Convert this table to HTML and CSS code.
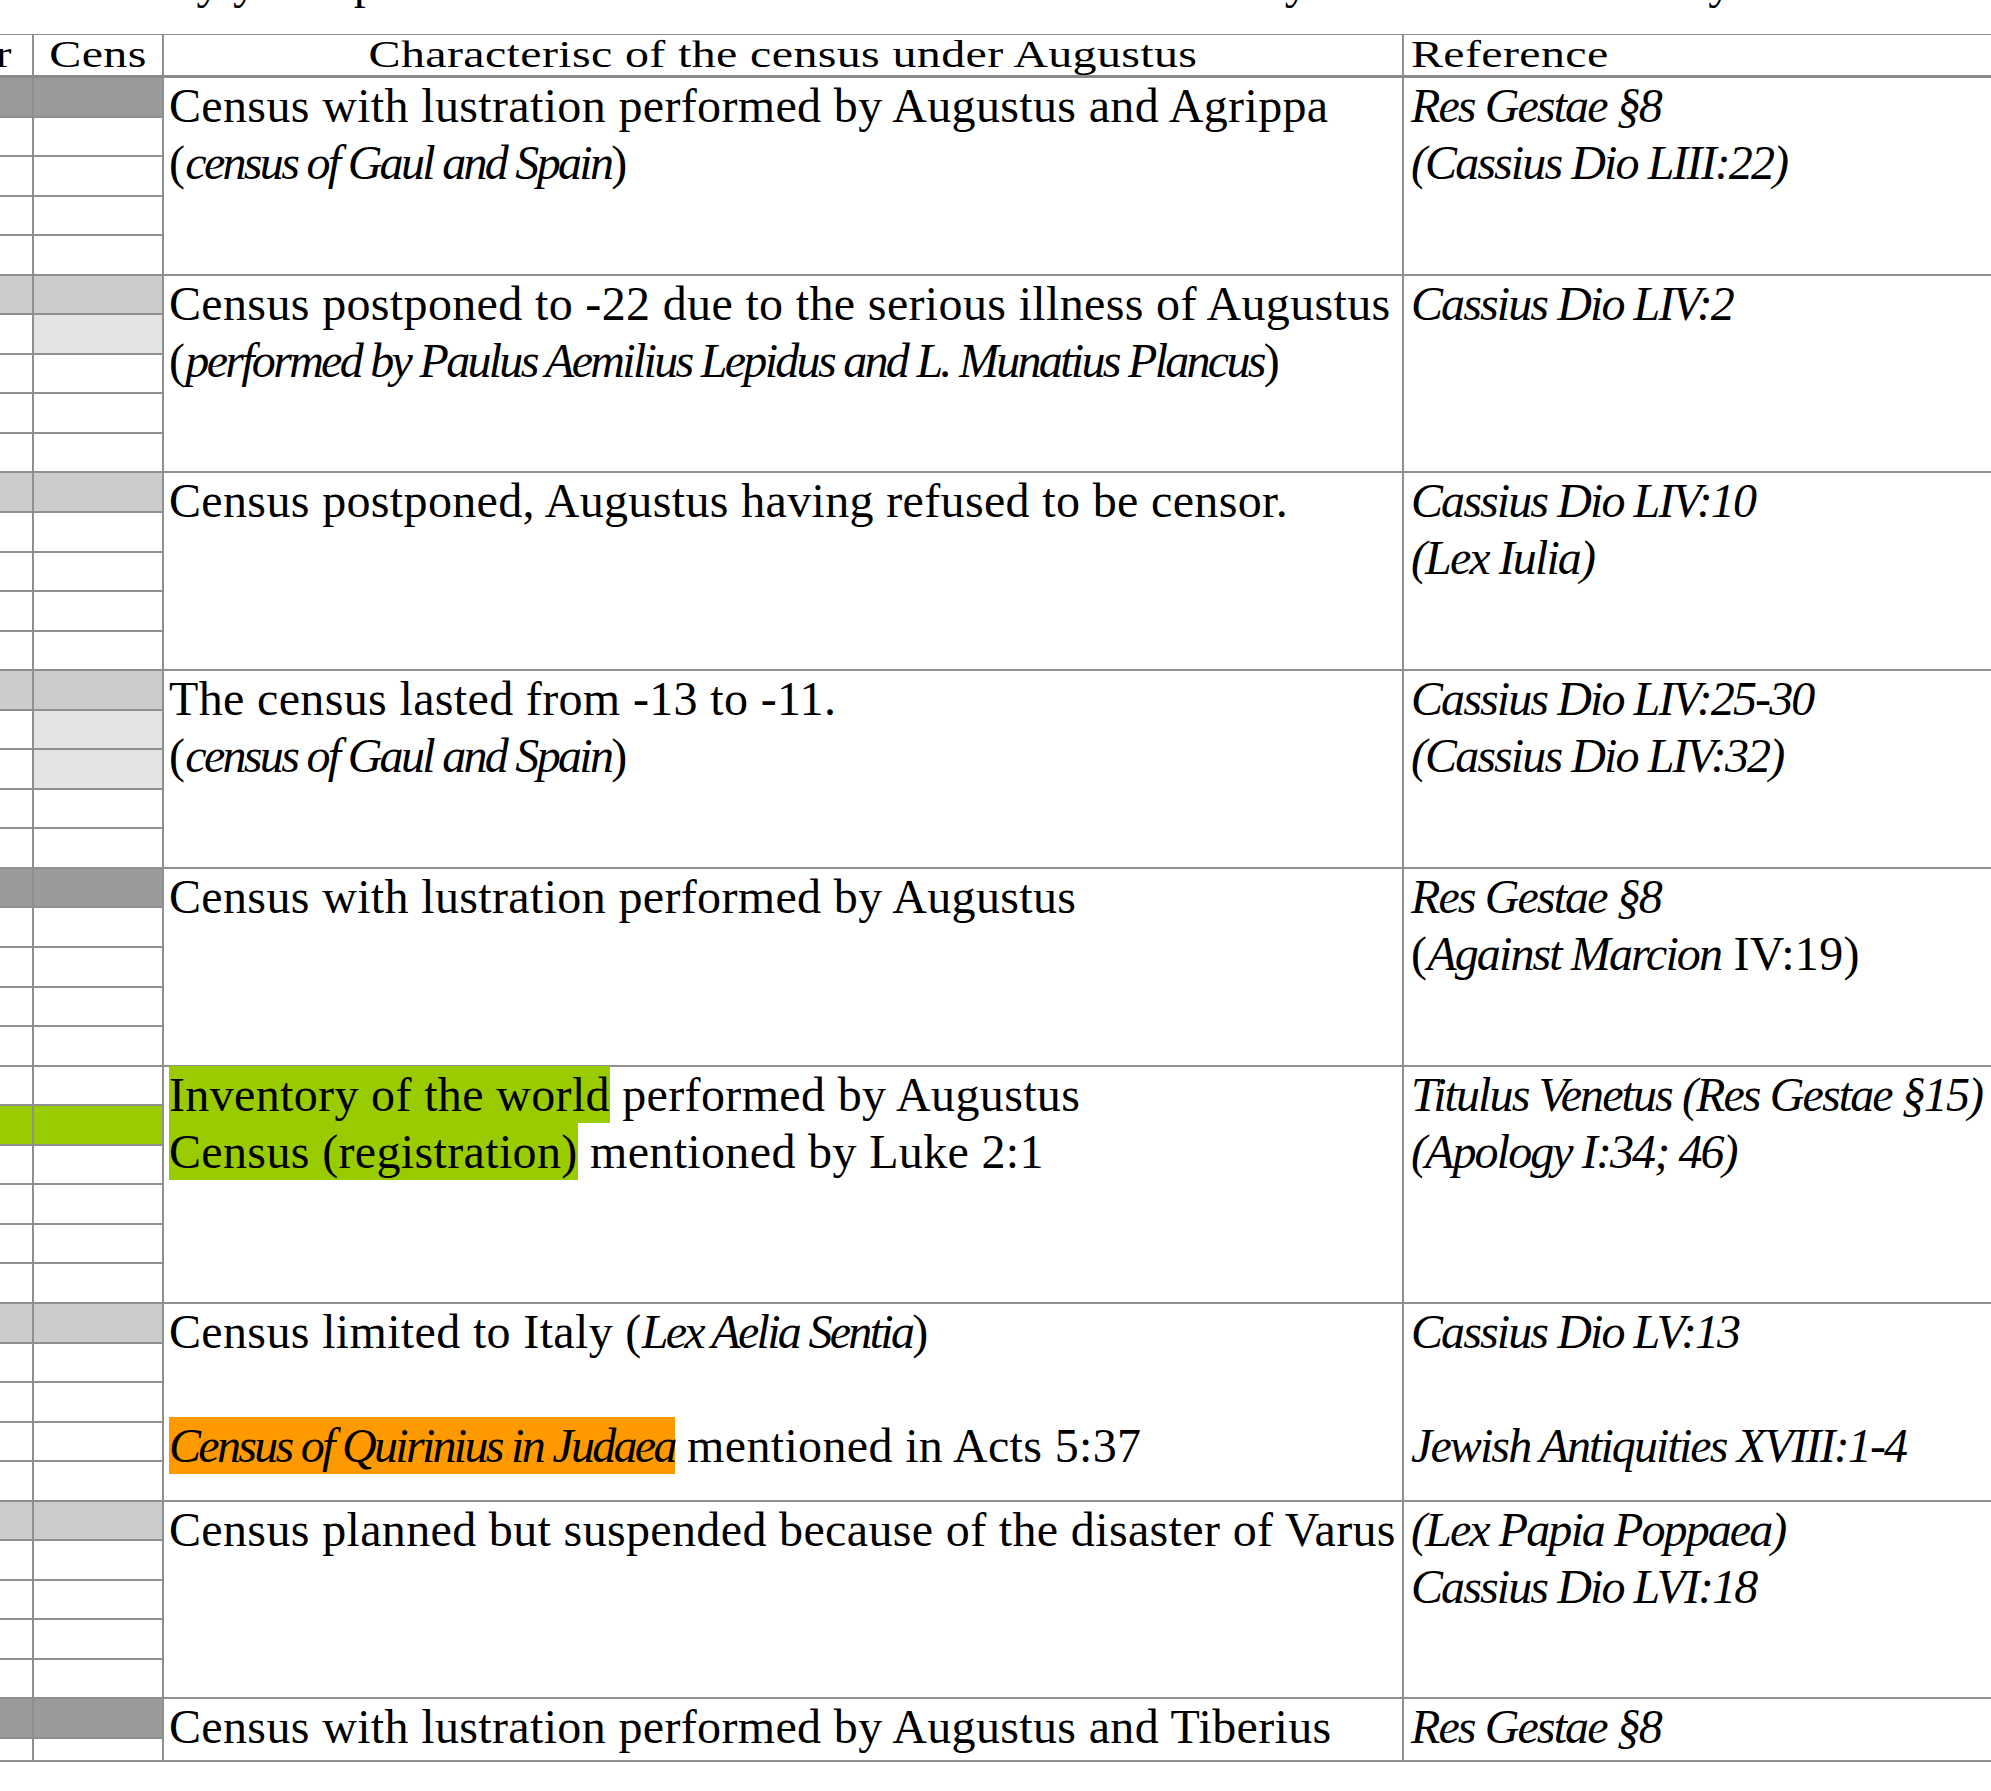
FILE: index.html
```html
<!DOCTYPE html>
<html lang="en">
<head>
<meta charset="utf-8">
<title>Census under Augustus</title>
<link rel="stylesheet" href="styles.css">
</head>
<body>
<div class="page">
  <p class="caption">Ordered by year up to the death of the last consul in the time of a year in which the early census was taken and ended</p>
  <div class="table">
    <div class="c hd"><span class="sq">Year</span></div>
    <div class="c hd"><span class="sq">Cens</span></div>
    <div class="c hd"><span class="sq">Characterisc of the census under Augustus</span></div>
    <div class="c hd left"><span class="sq">Reference</span></div>

    <!-- group 1 -->
    <div class="c dk"></div><div class="c dk"></div>
    <div class="c txt span5"><div class="in">
      <div class="ln">Census with lustration performed by Augustus and Agrippa</div>
      <div class="ln">(<i>census of Gaul and Spain</i>)</div>
    </div></div>
    <div class="c txt ref span5"><div class="in">
      <div class="ln"><i>Res Gestae §8</i></div>
      <div class="ln"><i>(Cassius Dio LIII:22)</i></div>
    </div></div>
    <div class="c"></div><div class="c"></div>
    <div class="c"></div><div class="c"></div>
    <div class="c"></div><div class="c"></div>
    <div class="c"></div><div class="c"></div>

    <!-- group 2 -->
    <div class="c lt"></div><div class="c lt"></div>
    <div class="c txt span5"><div class="in">
      <div class="ln">Census postponed to -22 due to the serious illness of Augustus</div>
      <div class="ln">(<i>performed by Paulus Aemilius Lepidus and L. Munatius Plancus</i>)</div>
    </div></div>
    <div class="c txt ref span5"><div class="in">
      <div class="ln"><i>Cassius Dio LIV:2</i></div>
    </div></div>
    <div class="c"></div><div class="c vl"></div>
    <div class="c"></div><div class="c"></div>
    <div class="c"></div><div class="c"></div>
    <div class="c"></div><div class="c"></div>

    <!-- group 3 -->
    <div class="c lt"></div><div class="c lt"></div>
    <div class="c txt span5"><div class="in">
      <div class="ln">Census postponed, Augustus having refused to be censor.</div>
    </div></div>
    <div class="c txt ref span5"><div class="in">
      <div class="ln"><i>Cassius Dio LIV:10</i></div>
      <div class="ln"><i>(Lex Iulia)</i></div>
    </div></div>
    <div class="c"></div><div class="c"></div>
    <div class="c"></div><div class="c"></div>
    <div class="c"></div><div class="c"></div>
    <div class="c"></div><div class="c"></div>

    <!-- group 4 -->
    <div class="c lt"></div><div class="c lt"></div>
    <div class="c txt span5"><div class="in">
      <div class="ln">The census lasted from -13 to -11.</div>
      <div class="ln">(<i>census of Gaul and Spain</i>)</div>
    </div></div>
    <div class="c txt ref span5"><div class="in">
      <div class="ln"><i>Cassius Dio LIV:25-30</i></div>
      <div class="ln"><i>(Cassius Dio LIV:32)</i></div>
    </div></div>
    <div class="c"></div><div class="c vl"></div>
    <div class="c"></div><div class="c vl"></div>
    <div class="c"></div><div class="c"></div>
    <div class="c"></div><div class="c"></div>

    <!-- group 5 -->
    <div class="c dk"></div><div class="c dk"></div>
    <div class="c txt span5"><div class="in">
      <div class="ln">Census with lustration performed by Augustus</div>
    </div></div>
    <div class="c txt ref span5"><div class="in">
      <div class="ln"><i>Res Gestae §8</i></div>
      <div class="ln">(<i>Against Marcion</i> IV:19)</div>
    </div></div>
    <div class="c"></div><div class="c"></div>
    <div class="c"></div><div class="c"></div>
    <div class="c"></div><div class="c"></div>
    <div class="c"></div><div class="c"></div>

    <!-- group 6 -->
    <div class="c"></div><div class="c"></div>
    <div class="c txt span6"><div class="in">
      <div class="ln"><span class="hl green">Inventory of the world</span> performed by Augustus</div>
      <div class="ln"><span class="hl green">Census (registration)</span> mentioned by Luke 2:1</div>
    </div></div>
    <div class="c txt ref span6"><div class="in">
      <div class="ln"><i>Titulus Venetus (Res Gestae §15)</i></div>
      <div class="ln"><i>(Apology I:34; 46)</i></div>
    </div></div>
    <div class="c gr"></div><div class="c gr"></div>
    <div class="c"></div><div class="c"></div>
    <div class="c"></div><div class="c"></div>
    <div class="c"></div><div class="c"></div>
    <div class="c"></div><div class="c"></div>

    <!-- group 7 -->
    <div class="c lt"></div><div class="c lt"></div>
    <div class="c txt span5"><div class="in">
      <div class="ln">Census limited to Italy (<i>Lex Aelia Sentia</i>)</div>
      <div class="ln"></div>
      <div class="ln"><span class="hl orange"><i>Census of Quirinius in Judaea</i></span> mentioned in Acts 5:37</div>
    </div></div>
    <div class="c txt ref span5"><div class="in">
      <div class="ln"><i>Cassius Dio LV:13</i></div>
      <div class="ln"></div>
      <div class="ln"><i>Jewish Antiquities XVIII:1-4</i></div>
    </div></div>
    <div class="c"></div><div class="c"></div>
    <div class="c"></div><div class="c"></div>
    <div class="c"></div><div class="c"></div>
    <div class="c"></div><div class="c"></div>

    <!-- group 8 -->
    <div class="c lt"></div><div class="c lt"></div>
    <div class="c txt span5"><div class="in">
      <div class="ln">Census planned but suspended because of the disaster of Varus</div>
    </div></div>
    <div class="c txt ref span5"><div class="in">
      <div class="ln"><i>(Lex Papia Poppaea)</i></div>
      <div class="ln"><i>Cassius Dio LVI:18</i></div>
    </div></div>
    <div class="c"></div><div class="c"></div>
    <div class="c"></div><div class="c"></div>
    <div class="c"></div><div class="c"></div>
    <div class="c"></div><div class="c"></div>

    <!-- group 9 -->
    <div class="c dk"></div><div class="c dk"></div>
    <div class="c txt span2"><div class="in">
      <div class="ln">Census with lustration performed by Augustus and Tiberius</div>
    </div></div>
    <div class="c txt ref span2"><div class="in">
      <div class="ln"><i>Res Gestae §8</i></div>
    </div></div>
    <div class="c"></div><div class="c"></div>
  </div>
</div>
</body>
</html>
```

FILE: styles.css
```css
html, body {
  margin: 0;
  padding: 0;
  overflow: hidden;
  background: #ffffff;
}

body {
  font-family: "Liberation Serif", "Times New Roman", serif;
  font-size: 48px;
  letter-spacing: 0.35px;
  color: #000000;
}

.page {
  width: 1991px;
  height: 1791px;
  overflow: hidden;
}

.caption {
  margin: -47px 0 24px 0;
  height: 57px;
  line-height: 57px;
  white-space: nowrap;
}

.table {
  display: grid;
  grid-template-columns: 132px 130px 1240px 700px;
  grid-template-rows: 44px repeat(42, 39.55px) 23px;
  margin-left: -98px;
  width: max-content;
}

.c {
  box-sizing: border-box;
  border-right: 2px solid #8f8f8f;
  border-bottom: 2px solid #8f8f8f;
  min-width: 0;
}

.hd {
  border-top: 1px solid #8f8f8f;
  border-bottom: 3px solid #8a8a8a;
  line-height: 40px;
  text-align: center;
  white-space: nowrap;
}

.hd.left {
  text-align: left;
  padding-left: 7px;
}

.sq {
  display: inline-block;
  line-height: 40px;
  transform: scaleY(0.78);
  transform-origin: center;
}

.dk { background: #9a9a9a; }
.lt { background: #cccccc; }
.vl { background: #e4e4e4; }
.gr { background: #99cc00; }

.txt {
  padding-left: 5px;
  line-height: 57px;
  white-space: nowrap;
}

.ref {
  padding-left: 7px;
}

.in {
  margin-top: -1px;
}

.ln {
  height: 57px;
}

.span5 { grid-row: span 5; }
.span6 { grid-row: span 6; }
.span2 { grid-row: span 2; }

i {
  font-style: italic;
  letter-spacing: -2.7px;
}

.ref i {
  letter-spacing: -1.9px;
}

.hl {
  display: inline-block;
  line-height: 57px;
}

.green { background: #99cc00; }
.orange { background: #ff9900; }
```
